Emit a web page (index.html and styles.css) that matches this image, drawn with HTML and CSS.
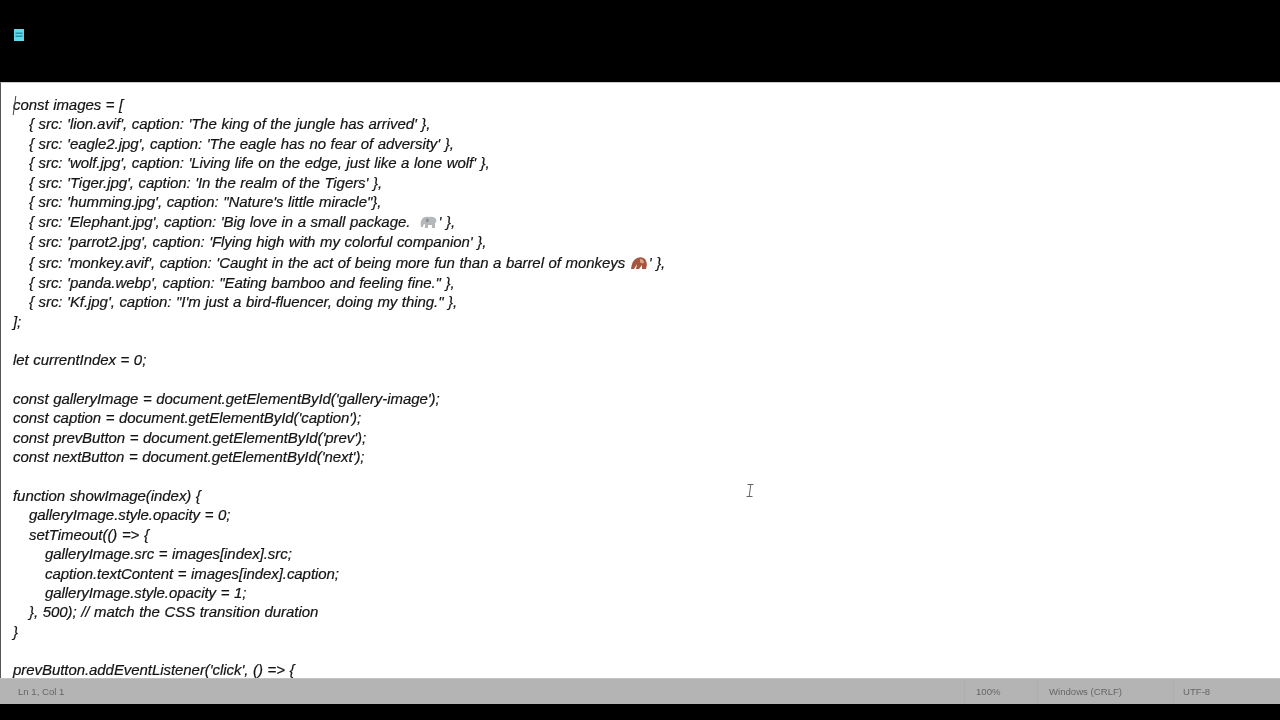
FILE: index.html
```html
<!DOCTYPE html>
<html lang="en">
<head>
    <meta charset="UTF-8">
    <title>script.js - Notepad</title>
    <link rel="stylesheet" href="styles.css">
</head>
<body>
    <div class="titlebar">
        <svg class="app-icon" width="10" height="12" viewBox="0 0 10 12">
            <rect width="10" height="12" fill="#5fd8ea"/>
            <rect x="1.5" y="3.5" width="7" height="1.5" fill="#2b93a8"/>
            <rect x="1.5" y="6.5" width="7" height="1.5" fill="#2b93a8"/>
        </svg>
    </div>

    <div class="editor">
        <div class="caret"></div>
        <div class="line">const images = [</div>
        <div class="line in1">{ src: 'lion.avif', caption: 'The king of the jungle has arrived' },</div>
        <div class="line in1">{ src: 'eagle2.jpg', caption: 'The eagle has no fear of adversity' },</div>
        <div class="line in1">{ src: 'wolf.jpg', caption: 'Living life on the edge, just like a lone wolf' },</div>
        <div class="line in1">{ src: 'Tiger.jpg', caption: 'In the realm of the Tigers' },</div>
        <div class="line in1">{ src: 'humming.jpg', caption: "Nature's little miracle"},</div>
        <div class="line in1 tall">{ src: 'Elephant.jpg', caption: 'Big love in a small package.  <svg class="emoji" width="18" height="13" viewBox="0 0 18 13"><path d="M2 3 Q4 0 9 1 Q14 0 16 3 Q17 6 15 7 L15 12 L12 12 L12 9 L8 9 L8 12 L5 12 L5 8 Q3 8 3 11 L1 11 Q0 6 2 3Z" fill="#b4b8bb"/><path d="M6 3 Q8 2 9 4 Q9 7 6 6Z" fill="#8b9094"/></svg>' },</div>
        <div class="line in1">{ src: 'parrot2.jpg', caption: 'Flying high with my colorful companion' },</div>
        <div class="line in1 tall">{ src: 'monkey.avif', caption: 'Caught in the act of being more fun than a barrel of monkeys <svg class="emoji" width="18" height="14" viewBox="0 0 18 14"><path d="M1 13 Q2 4 7 2 Q12 0 15 3 Q18 7 16 13 L12 13 L12 9 L9 13 L6 13 L7 8 L4 13Z" fill="#a8553f"/><path d="M10 3 Q14 3 14 7 Q11 8 10 6Z" fill="#d9a58c"/></svg>' },</div>
        <div class="line in1">{ src: 'panda.webp', caption: "Eating bamboo and feeling fine." },</div>
        <div class="line in1">{ src: 'Kf.jpg', caption: "I'm just a bird-fluencer, doing my thing." },</div>
        <div class="line">];</div>
        <div class="line"></div>
        <div class="line">let currentIndex = 0;</div>
        <div class="line"></div>
        <div class="line">const galleryImage = document.getElementById('gallery-image');</div>
        <div class="line">const caption = document.getElementById('caption');</div>
        <div class="line">const prevButton = document.getElementById('prev');</div>
        <div class="line">const nextButton = document.getElementById('next');</div>
        <div class="line"></div>
        <div class="line">function showImage(index) {</div>
        <div class="line in1">galleryImage.style.opacity = 0;</div>
        <div class="line in1">setTimeout(() =&gt; {</div>
        <div class="line in2">galleryImage.src = images[index].src;</div>
        <div class="line in2">caption.textContent = images[index].caption;</div>
        <div class="line in2">galleryImage.style.opacity = 1;</div>
        <div class="line in1">}, 500); // match the CSS transition duration</div>
        <div class="line">}</div>
        <div class="line"></div>
        <div class="line last">prevButton.addEventListener('click', () =&gt; {</div>
        <svg class="ibeam" width="8" height="13" viewBox="0 0 8 13">
            <path d="M1.5 .5H7.5M.5 12.5H6.5M4.8 .5L3.2 12.5" stroke="#666" stroke-width="1" fill="none"/>
        </svg>
    </div>

    <div class="statusbar">
        <div class="status-left">Ln 1, Col 1</div>
        <div class="status-cell zoom">100%</div>
        <div class="status-cell eol">Windows (CRLF)</div>
        <div class="status-cell enc">UTF-8</div>
    </div>
    <div class="bottom"></div>
</body>
</html>
```

FILE: styles.css
```css
html, body {
    height: 100%;
}
body {
    margin: 0;
    background: #000;
    display: flex;
    flex-direction: column;
    height: 720px;
    overflow: hidden;
    font-family: 'Liberation Sans', Arial, sans-serif;
}
.titlebar {
    height: 82px;
    flex-shrink: 0;
    background: #000;
    display: flex;
    align-items: center;
    padding-left: 14px;
    padding-bottom: 12px;
    box-sizing: border-box;
}
.app-icon {
    filter: blur(0.4px);
}
.editor {
    flex: 1;
    min-height: 0;
    overflow: hidden;
    position: relative;
    background: #fff;
    border-left: 1px solid #555;
    border-top: 1px solid #ccc;
    padding: 12px 0 0 12px;
    font-size: 15px;
    font-style: italic;
    color: #141414;
    -webkit-text-stroke: 0.2px #141414;
    word-spacing: 0.5px;
    letter-spacing: -0.06px;
    filter: blur(0.3px);
}
.line {
    height: 19.4px;
    line-height: 19.4px;
    white-space: pre;
}
.line.tall {
    height: 21px;
    line-height: 21px;
}
.line.last {
    height: 16px;
    line-height: 16px;
    margin-top: 1.7px;
}
.in1 {
    padding-left: 16px;
}
.in2 {
    padding-left: 32px;
}
.emoji {
    vertical-align: -2px;
    margin-right: 1px;
}
.caret {
    position: absolute;
    left: 13px;
    top: 13px;
    width: 1px;
    height: 19px;
    background: #444;
    transform: skewX(-8deg);
}
.ibeam {
    position: absolute;
    left: 745px;
    top: 401px;
}
.statusbar {
    height: 26px;
    flex-shrink: 0;
    background: #b4b4b4;
    border-top: 1px solid #c4c4c4;
    box-sizing: border-box;
    display: flex;
    align-items: center;
    font-size: 9.6px;
    color: #666;
    filter: blur(0.3px);
}
.status-left {
    flex: 1;
    padding-left: 18px;
}
.status-cell {
    border-left: 1px solid #adadad;
    height: 100%;
    display: flex;
    align-items: center;
    box-sizing: border-box;
}
.zoom {
    width: 73px;
    padding-left: 11px;
}
.eol {
    width: 136px;
    padding-left: 11px;
}
.enc {
    width: 107px;
    padding-left: 9px;
}
.bottom {
    height: 16px;
    flex-shrink: 0;
    background: #000;
}
```
